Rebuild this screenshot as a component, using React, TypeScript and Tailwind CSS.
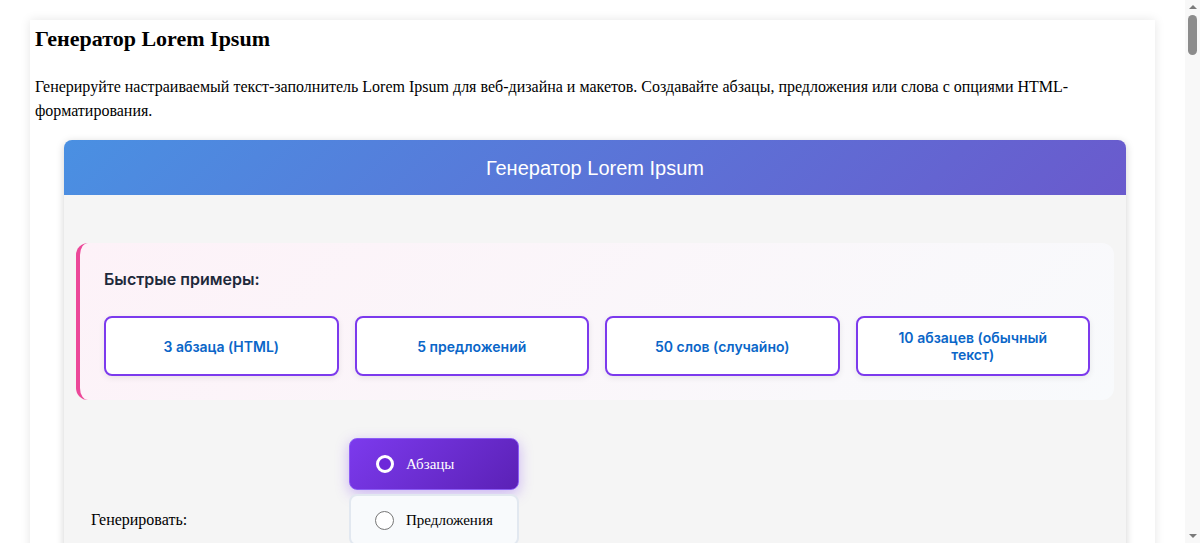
import React from "react";

const examples = ["3 абзаца (HTML)", "5 предложений", "50 слов (случайно)", "10 абзацев (обычный текст)"];

const types = [
  { label: "Абзацы", checked: true },
  { label: "Предложения", checked: false },
  { label: "Слова", checked: false },
];

function RadioDot({ checked }: { checked: boolean }) {
  if (checked) {
    return (
      <span className="w-[18px] h-[18px] rounded-full border-[3px] border-white bg-[#6d28d9] shrink-0" />
    );
  }
  return <span className="w-[19px] h-[19px] rounded-full border border-[#767676] bg-white shrink-0" />;
}

// the window's scrollbar, drawn since the headless page hides its own
function ScrollBar() {
  return (
    <div className="fixed top-0 right-0 h-screen w-[15px] bg-[#f8f8f8] flex flex-col items-center">
      <span className="mt-[5px] w-0 h-0 border-x-[4px] border-x-transparent border-b-[4px] border-b-[#7a7a7a]" />
      <span className="mt-[6px] w-[9px] h-[40px] rounded-full bg-[#8c8c8c]" />
      <span className="mt-auto mb-[5px] w-0 h-0 border-x-[4px] border-x-transparent border-t-[4px] border-t-[#7a7a7a]" />
    </div>
  );
}

export default function App() {
  return (
    <div className="bg-white min-h-screen pt-[20px] pb-10" style={{ fontFamily: '"Liberation Serif", serif' }}>
      <ScrollBar />
      <div className="ml-[30px] w-[1125px] bg-white shadow-[0_0_10px_rgba(0,0,0,0.1)] px-[5px] pt-[5px] pb-10 min-h-[6800px]">
        <h1 className="text-[22px] font-bold leading-[28px] text-black">Генератор Lorem Ipsum</h1>
        <p className="mt-[22px] text-[16px] leading-[24px] text-black">
          Генерируйте настраиваемый текст-заполнитель Lorem Ipsum для веб-дизайна и макетов. Создавайте абзацы, предложения или слова с опциями HTML-форматирования.
        </p>

        <div className="mt-[17px] ml-[29px] w-[1062px] rounded-lg overflow-hidden bg-[#f5f5f5] shadow-[0_2px_8px_rgba(0,0,0,0.18)]">
          <div
            className="h-[55px] flex items-center justify-center bg-[linear-gradient(135deg,#4a90e2,#6a5acd)] text-white text-[20px]"
            style={{ fontFamily: '"Liberation Sans", Arial, sans-serif' }}
          >
            Генератор Lorem Ipsum
          </div>

          <div className="px-3 pt-12 pb-10">
            <div
              className="border-l-4 border-[#ec4899] rounded-xl bg-[linear-gradient(135deg,#fdf2f8,#f8fafc)] p-6"
              style={{ fontFamily: "Inter, sans-serif" }}
            >
              <h3 className="text-[16px] leading-6 font-semibold text-[#1e293b]">Быстрые примеры:</h3>
              <div className="mt-[25px] grid grid-cols-4 gap-4">
                {examples.map((e) => (
                  <button
                    key={e}
                    className="h-[60px] px-6 rounded-lg border-2 border-[#7c3aed] bg-white text-[#0a66c8] text-[14px] leading-[17px] font-semibold text-center shadow-[0_2px_6px_rgba(0,0,0,0.08)]"
                  >
                    {e}
                  </button>
                ))}
              </div>
            </div>

            <div className="mt-[38px] flex items-center">
              <div className="w-[273px] pl-[15px] text-[16px] text-black">Генерировать:</div>
              <div className="flex flex-col gap-1 w-[170px]">
                {types.map((t) =>
                  t.checked ? (
                    <label
                      key={t.label}
                      className="h-[52px] flex items-center gap-[12px] pl-[26px] rounded-lg border border-[#8b5cf6] bg-[linear-gradient(135deg,#7c3aed,#5b21b6)] text-white text-[15px] shadow-[0_4px_14px_rgba(124,58,237,0.35)]"
                    >
                      <RadioDot checked />
                      {t.label}
                    </label>
                  ) : (
                    <label
                      key={t.label}
                      className="h-[52px] flex items-center gap-[12px] pl-[24px] rounded-lg border-2 border-[#e2e8f0] bg-[#f8fafc] text-black text-[15px]"
                    >
                      <RadioDot checked={false} />
                      {t.label}
                    </label>
                  )
                )}
              </div>
            </div>
          </div>
        </div>
      </div>
    </div>
  );
}
